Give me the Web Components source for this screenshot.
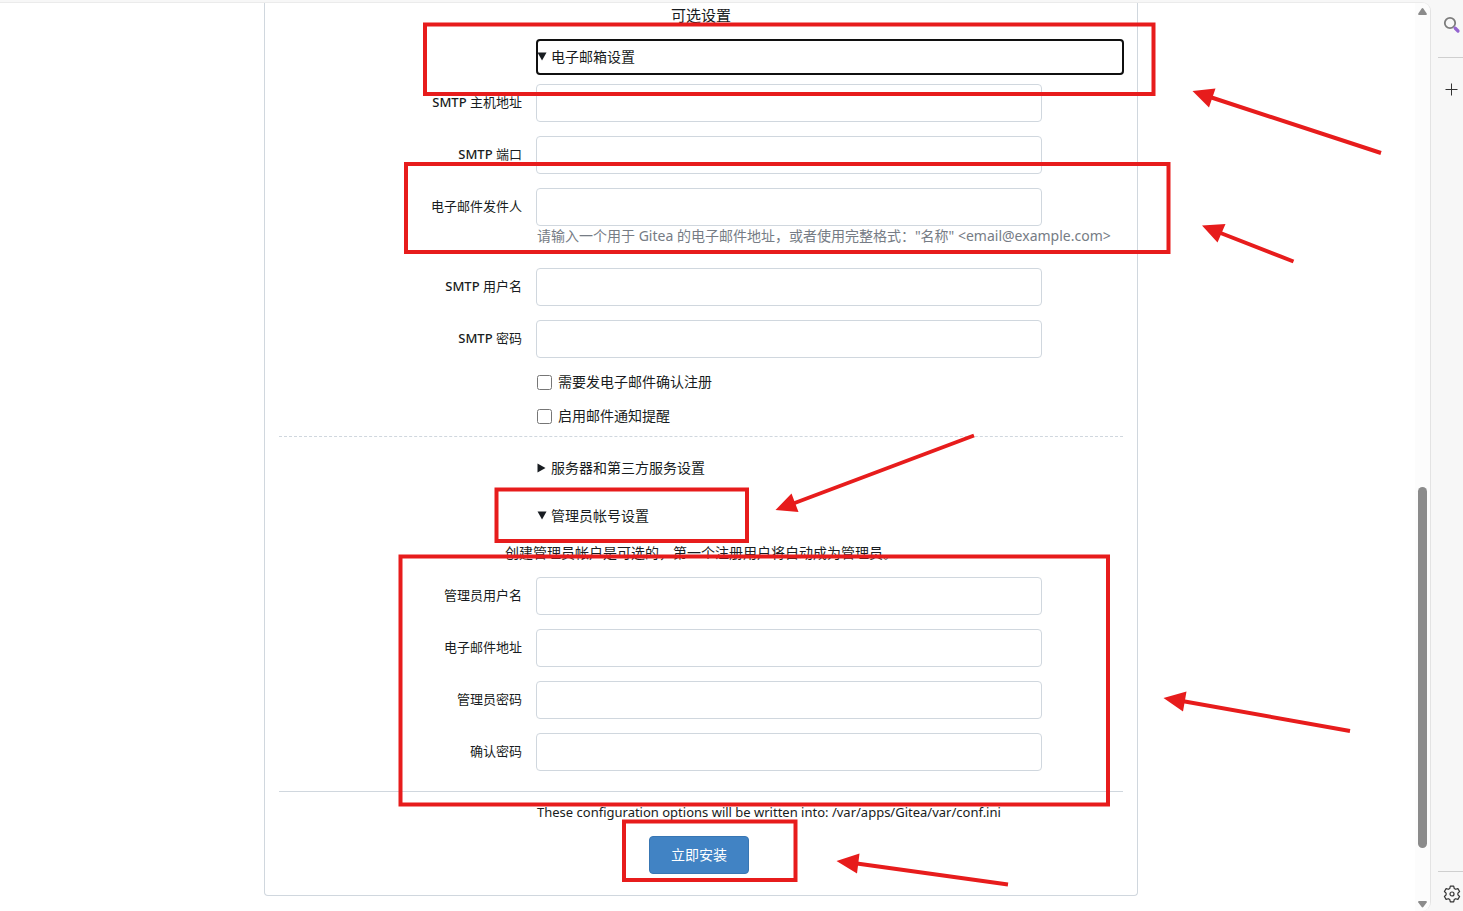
<!DOCTYPE html>
<html lang="zh-CN">
<head>
<meta charset="utf-8">
<meta name="viewport" content="width=device-width, initial-scale=1">
<title>Gitea 安装</title>
<style>
    body {
        margin: 0;
        color: #181c21;
        font: 14px/20px "Noto Sans", "Noto Sans CJK SC", sans-serif;
    }
</style>
</head>
<body>
<browser-frame>
    <install-panel heading="可选设置">
        <settings-group label="电子邮箱设置" open active>
            <text-field label="SMTP 主机地址" name="smtp_addr"></text-field>
            <text-field label="SMTP 端口" name="smtp_port"></text-field>
            <text-field label="电子邮件发件人" name="smtp_from">请输入一个用于 Gitea 的电子邮件地址，或者使用完整格式："名称" &lt;email@example.com&gt;</text-field>
            <text-field label="SMTP 用户名" name="smtp_user"></text-field>
            <text-field label="SMTP 密码" name="smtp_passwd" type="password"></text-field>
            <check-field label="需要发电子邮件确认注册" name="register_confirm"></check-field>
            <check-field label="启用邮件通知提醒" name="mail_notify"></check-field>
        </settings-group>
        <settings-group label="服务器和第三方服务设置" divided></settings-group>
        <settings-group label="管理员帐号设置" open>
            <group-note>创建管理员帐户是可选的，第一个注册用户将自动成为管理员。</group-note>
            <text-field label="管理员用户名" name="admin_name"></text-field>
            <text-field label="电子邮件地址" name="admin_email" type="email"></text-field>
            <text-field label="管理员密码" name="admin_passwd" type="password"></text-field>
            <text-field label="确认密码" name="admin_confirm_passwd" type="password"></text-field>
        </settings-group>
        <span slot="note">These configuration options will be written into: /var/apps/Gitea/var/conf.ini</span>
        <span slot="submit">立即安装</span>
    </install-panel>
    <side-rail slot="rail"></side-rail>
</browser-frame>
<mark-layer></mark-layer>

<script>
class BrowserFrame extends HTMLElement {
    constructor() {
        super();
        this.attachShadow({ mode: "open" });
    }

    connectedCallback() {
        this.shadowRoot.innerHTML = `
            <style>
            :host {
                display: flex;
                height: 100vh;
                box-sizing: border-box;
                padding-top: 2px;
                background: #f7f7f7;
            }
            .page {
                flex: 1;
                display: flex;
                overflow: hidden;
                background: #fff;
                border-top: 1px solid #ebebeb;
                border-right: 1px solid #e3e3e3;
                border-radius: 0 9px 9px 0;
            }
            main {
                flex: 1;
                overflow: hidden;
                padding-right: 13px;
            }
            .scroll {
                display: flex;
                flex-direction: column;
                align-items: center;
                width: 15px;
                box-sizing: border-box;
                padding: 5px 0 3px;
                background: #fcfcfc;
            }
            .thumb {
                width: 9px;
                flex: 361;
                border-radius: 5px;
                background: #8b8b8b;
            }
            .before {
                flex: 471;
            }
            .after {
                flex: 52;
            }
            .scroll svg {
                width: 9px;
                height: 8px;
                fill: #8b8b8b;
            }
            </style>
            <div class="page">
                <main><slot></slot></main>
                <div class="scroll">
                    <svg viewBox="0 0 9 8"><path d="M3.5 .7Q4.5 -.5 5.5 .7L8.7 5.6Q9.2 7 8 7H1Q-.2 7 .3 5.6Z"/></svg>
                    <div class="before"></div>
                    <div class="thumb"></div>
                    <div class="after"></div>
                    <svg viewBox="0 0 9 8"><path d="M3.5 6.8Q4.5 8 5.5 6.8L8.7 2.4Q9.2 1 8 1H1Q-.2 1 .3 2.4Z"/></svg>
                </div>
            </div>
            <slot name="rail"></slot>
        `;
    }
}

class InstallPanel extends HTMLElement {
    constructor() {
        super();
        this.attachShadow({ mode: "open" });
    }

    connectedCallback() {
        this.shadowRoot.innerHTML = `
            <style>
            :host {
                display: block;
                box-sizing: border-box;
                max-width: 874px;
                margin: 0 auto;
                padding: 0 14px 21px;
                border: 1px solid #d0d7de;
                border-top: 0;
                border-radius: 0 0 4px 4px;
            }
            h4 {
                margin: 0;
                padding-bottom: 12px;
                font-size: 15px;
                line-height: 24px;
                font-weight: 400;
                text-align: center;
            }
            hr {
                margin: 20px 0 10px;
                border: 0;
                border-top: 1px solid #d0d7de;
            }
            .note {
                margin-left: 258px;
                font-size: 13px;
            }
            .submit {
                margin-top: 14px;
                text-align: center;
            }
            button {
                display: inline-block;
                vertical-align: top;
                height: 38px;
                margin: 0 4px 0 0;
                padding: 0 21px;
                border: 1px solid #3876b3;
                border-radius: 4px;
                background: #4183c4;
                color: #fff;
                font: inherit;
            }
            </style>
            <form>
                <h4>${this.getAttribute("heading")}</h4>
                <slot></slot>
                <hr>
                <div class="note"><slot name="note"></slot></div>
                <div class="submit"><button type="button"><slot name="submit"></slot></button></div>
            </form>
        `;
    }
}

class SettingsGroup extends HTMLElement {
    constructor() {
        super();
        this.attachShadow({ mode: "open" });
    }

    connectedCallback() {
        const open = this.hasAttribute("open") ? "open" : "";

        this.shadowRoot.innerHTML = `
            <style>
            :host {
                display: block;
                padding-top: 12px;
            }
            :host([active]) {
                padding-top: 0;
            }
            :host([divided]) {
                margin-top: 10px;
                border-top: 1px dashed #d0d7de;
            }
            summary {
                display: flex;
                align-items: center;
                gap: 4px;
                height: 34px;
                margin: 1px 0 1px 258px;
                list-style: none;
                border-radius: 3px;
            }
            :host([active]) summary {
                outline: 2px solid #101010;
                outline-offset: -1px;
            }
            summary::-webkit-details-marker {
                display: none;
            }
            svg {
                width: 10px;
                height: 10px;
                fill: #181c21;
            }
            details[open] svg {
                transform: rotate(90deg);
            }
            .fields {
                display: flex;
                flex-direction: column;
                gap: 14px;
                padding-top: 9px;
            }
            details:not([open]) {
                padding-top: 1px;
            }
            </style>
            <details ${open}>
                <summary><svg viewBox="0 0 10 10"><path d="M.5 .5v9L8.500 5z"/></svg>${this.getAttribute("label")}</summary>
                <div class="fields"><slot></slot></div>
            </details>
        `;
    }
}

class GroupNote extends HTMLElement {
    constructor() {
        super();
        this.attachShadow({ mode: "open" });
    }

    connectedCallback() {
        this.shadowRoot.innerHTML = `
            <style>
            :host {
                display: block;
                text-align: center;
            }
            </style>
            <slot></slot>
        `;
    }
}

class TextField extends HTMLElement {
    constructor() {
        super();
        this.attachShadow({ mode: "open" });
    }

    connectedCallback() {
        const name = this.getAttribute("name");
        const type = this.getAttribute("type") || "text";
        const label = this.getAttribute("label").replace("SMTP", "<b>SMTP</b>");
        const help = this.textContent.trim() ? `<div class="help"><slot></slot></div>` : "";

        this.shadowRoot.innerHTML = `
            <style>
            :host {
                display: block;
            }
            .row {
                display: flex;
                gap: 14px;
            }
            label {
                flex: 0 0 243px;
                padding-top: 8px;
                font-size: 13px;
                text-align: right;
            }
            b {
                font-weight: 500;
            }
            input {
                flex: 0 1 506px;
                min-width: 0;
                height: 38px;
                box-sizing: border-box;
                padding: 0 13px;
                border: 1px solid #d0d7de;
                border-radius: 4px;
                background: #fff;
                color: inherit;
                font: inherit;
            }
            .help {
                margin-left: 258px;
                padding-bottom: 8px;
                color: #767c85;
            }
            </style>
            <div class="row">
                <label for="${name}">${label}</label>
                <input id="${name}" name="${name}" type="${type}">
            </div>
            ${help}
        `;
    }
}

class CheckField extends HTMLElement {
    constructor() {
        super();
        this.attachShadow({ mode: "open" });
    }

    connectedCallback() {
        const name = this.getAttribute("name");

        this.shadowRoot.innerHTML = `
            <style>
            :host {
                display: flex;
                align-items: center;
                gap: 6px;
                margin-left: 258px;
            }
            input {
                width: 15px;
                height: 15px;
                margin: 0;
            }
            </style>
            <input id="${name}" name="${name}" type="checkbox">
            <label for="${name}">${this.getAttribute("label")}</label>
        `;
    }
}

class SideRail extends HTMLElement {
    constructor() {
        super();
        this.attachShadow({ mode: "open" });
    }

    connectedCallback() {
        this.shadowRoot.innerHTML = `
            <style>
            :host {
                display: flex;
                flex-direction: column;
                width: 25px;
                padding-left: 7px;
            }
            button {
                display: flex;
                justify-content: center;
                align-items: center;
                width: 28px;
                padding: 0;
                border: 0;
                background: none;
            }
            .search {
                height: 55px;
                padding-bottom: 9px;
            }
            .add {
                height: 63px;
            }
            .settings {
                height: 39px;
                padding-top: 4px;
            }
            .line {
                height: 1px;
                background: #cfcfcf;
            }
            .space {
                flex: 1;
            }
            svg {
                width: 18px;
                height: 18px;
                fill: none;
            }
            </style>
            <button class="search" type="button" aria-label="搜索">
                <svg viewBox="0 0 18 18">
                    <circle cx="7" cy="7" r="5.2" stroke="#7c7c7c" stroke-width="1.8"/>
                    <path d="M11 11l2 2" stroke="#a77bd8" stroke-width="2.5"/>
                    <path d="M12.500 12.500l2.500 2.500" stroke="#9364cf" stroke-width="3.2" stroke-linecap="round"/>
                </svg>
            </button>
            <div class="line"></div>
            <button class="add" type="button" aria-label="添加">
                <svg viewBox="0 0 18 18"><path d="M2.500 8.500h12M8.500 2.500v12" stroke="#333" stroke-width="1"/></svg>
            </button>
            <div class="space"></div>
            <div class="line"></div>
            <button class="settings" type="button" aria-label="设置">
                <svg viewBox="0 0 18 18" stroke="#333" stroke-width="1.2" stroke-linejoin="round">
                    <path d="M7.3 1.2h3.4l.5 2.2 1.5.9 2.2-.7 1.7 2.9-1.7 1.6v1.8l1.7 1.6-1.7 2.9-2.2-.7-1.5.9-.5 2.2H7.3l-.5-2.2-1.5-.9-2.2.7-1.7-2.9 1.7-1.6V8.1L1.4 6.5l1.7-2.9 2.2.7 1.5-.9z"/>
                    <circle cx="9" cy="9" r="2"/>
                </svg>
            </button>
        `;
    }
}

// red boxes and arrows drawn over the form
class MarkLayer extends HTMLElement {
    constructor() {
        super();
        this.attachShadow({ mode: "open" });
    }

    connectedCallback() {
        this.shadowRoot.innerHTML = `
            <style>
            :host {
                position: absolute;
                inset: 0;
                overflow: hidden;
                pointer-events: none;
            }
            svg {
                display: block;
                width: 1463px;
                height: 911px;
            }
            .lines {
                fill: none;
                stroke: #e71c1c;
                stroke-width: 4;
            }
            .heads {
                fill: #e71c1c;
            }
            </style>
            <svg viewBox="0 0 1463 911">
                <g class="lines">
                    <rect x="425" y="24.5" width="728.5" height="69.5"/>
                    <rect x="406" y="164" width="762.5" height="88"/>
                    <rect x="496.500" y="489.500" width="250.500" height="51.500"/>
                    <rect x="400.500" y="556.500" width="707.500" height="248"/>
                    <rect x="624" y="821.5" width="171.5" height="58.5"/>
                    <path d="M1210 97L1381 153M1218 232L1293.500 261.500M792 504L974 435.500M1182 701L1350 731M855 863.300L1008 884.500"/>
                </g>
                <path class="heads" d="M1192.500 91L1215.500 88.500L1209 107.500zM1202 225.500L1225.500 224L1217.500 242.500zM775.500 510L791.500 493.500L798.500 512zM1163.500 698L1186.500 691.500L1183 711.500zM836.500 861L859.500 853.500L857 873.500z"/>
            </svg>
        `;
    }
}

customElements.define("group-note", GroupNote);
customElements.define("text-field", TextField);
customElements.define("check-field", CheckField);
customElements.define("settings-group", SettingsGroup);
customElements.define("install-panel", InstallPanel);
customElements.define("side-rail", SideRail);
customElements.define("browser-frame", BrowserFrame);
customElements.define("mark-layer", MarkLayer);
</script>
</body>
</html>
